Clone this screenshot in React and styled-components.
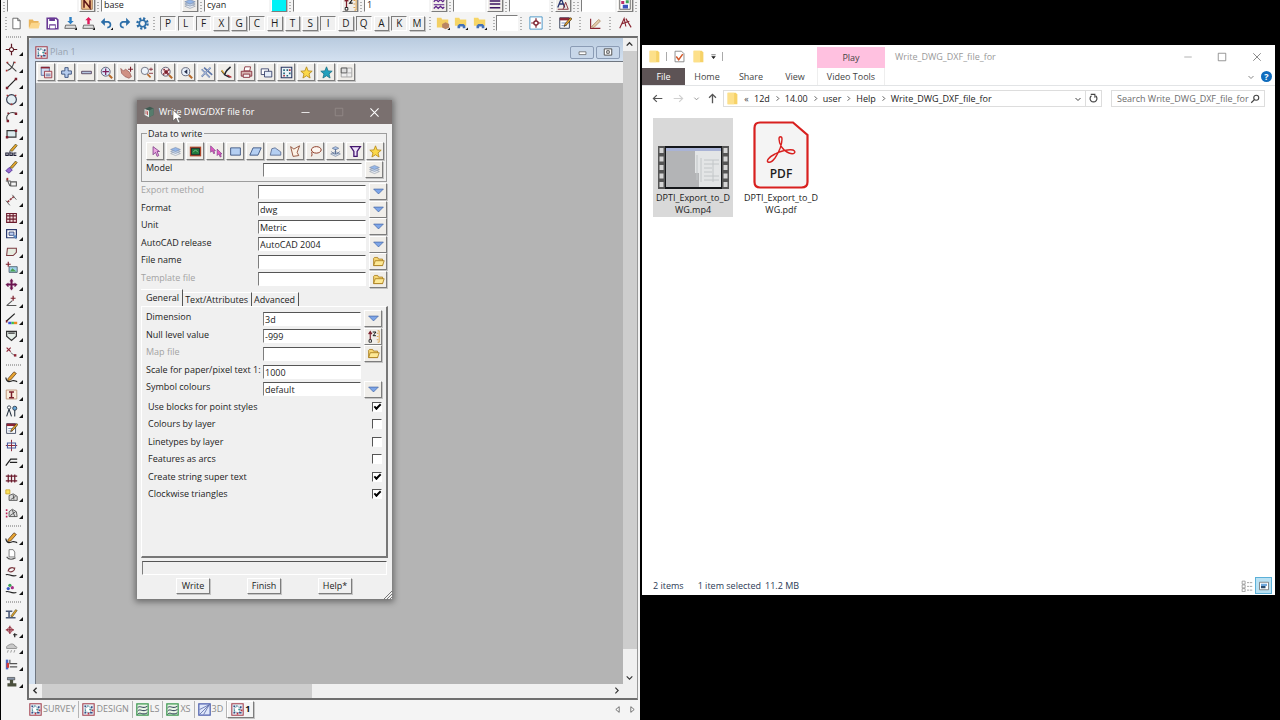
import React from "react";
import styled, { createGlobalStyle, css } from "styled-components";

const GlobalStyle = createGlobalStyle`
  *, *::before, *::after {
    box-sizing: border-box;
  }

  body {
    margin: 0;
    background: #000;
    color: #1c1c1c;
    font: 9px/12px "Open Sans", "Noto Sans", sans-serif;
  }

  button, input, select {
    margin: 0;
    padding: 0;
    border: 0;
    border-radius: 0;
    background: none;
    color: inherit;
    font: inherit;
  }
`;

/* ---------- icons, all on a 16 x 16 grid ---------- */

const star = "M8 1l2 5 5 .4-3.900 3.300 1.300 5.100L8 12l-4.400 2.800 1.300-5.100L1 6.400 6 6z";
const maroon = "#7c1f2c";

const icons = {
  newDoc: (
    <path d="M3.500 1.500h6l3 3v10h-9zM9.500 1.500v3h3" fill="#fff" stroke="#555" />
  ),
  openFolder: (
    <>
      <path d="M1 13V3h5l1 2h6v8z" fill="#e9b45c" />
      <path d="M1 14l3-7h11l-2 7z" fill="#fbd68c" />
    </>
  ),
  save: (
    <>
      <path d="M1.500 1.500h11l2 2v11h-13z" fill="#fff" stroke="#6a3a96" strokeWidth="2" />
      <path d="M4 1h7v4H4zM4 9h8v6H4z" fill="#6a3a96" />
      <path d="M5 10.500h6V14H5z" fill="#fff" />
    </>
  ),
  importData: (
    <>
      <path d="M2 10h12l1 4H1z" fill="#ddd" stroke="#555" />
      <path d="M6.500 0h3v5H12L8 9 4 5h2.500z" fill="#2e7fc2" />
      <path d="M13 16h3v-3z" fill="#111" />
    </>
  ),
  exportData: (
    <>
      <path d="M2 10h12l1 4H1z" fill="#ddd" stroke="#555" />
      <path d="M6.500 9h3V4H12L8 0 4 4h2.500z" fill="#e0195a" />
      <path d="M13 16h3v-3z" fill="#111" />
    </>
  ),
  undo: (
    <>
      <path d="M3 6h7c4 1 4 7-1 7" fill="none" stroke="#2c6ea8" strokeWidth="2" />
      <path d="M6 1v10L1 6z" fill="#2c6ea8" />
      <path d="M13 16h3v-3z" fill="#111" />
    </>
  ),
  redo: (
    <>
      <path d="M13 6H6c-4 1-4 7 1 7" fill="none" stroke="#2c6ea8" strokeWidth="2" />
      <path d="M10 1v10l5-5z" fill="#2c6ea8" />
    </>
  ),
  gear: (
    <>
      <circle cx="8" cy="8" r="6.200" fill="none" stroke="#2c6ea8" strokeWidth="3" strokeDasharray="2.600 2.270" />
      <circle cx="8" cy="8" r="4" fill="none" stroke="#2c6ea8" strokeWidth="2" />
    </>
  ),
  name: (
    <>
      <path d="M1 1h14v14H1z" fill="#f6c690" stroke="#8b5a2b" />
      <path d="M4 13V3l8 10V3" fill="none" stroke="#5a1414" strokeWidth="2" />
    </>
  ),
  layers: (
    <>
      <path d="M8 8l6 2.500L8 13l-6-2.500z" fill="#e9edf3" stroke="#8a94a4" strokeWidth=".7" />
      <path d="M8 5.500L14 8l-6 2.500L2 8z" fill="#c3d2e8" stroke="#7f8da4" strokeWidth=".7" />
      <path d="M8 3l6 2.500L8 8 2 5.500z" fill="#94b6e8" stroke="#7788a6" strokeWidth=".7" />
    </>
  ),
  height: (
    <>
      <path d="M4 3v10M2 5l2-3 2 3" fill="none" stroke={maroon} strokeWidth="1.400" />
      <path d="M2.500 12h3v3h-3z" fill="#fff" stroke="#111" />
      <path d="M7 2.500h4L7.500 7H11" fill="none" stroke="#111" strokeWidth="1.200" />
      <path d="M13 1h2v14h-2M12 4h2M12 8h2M12 12h2" fill="none" stroke="#d99632" />
    </>
  ),
  waves: (
    <path d="M1 5l3-3 3 3 3-3 3 3 2-2M1 9h14M1 14l3-3 3 3 3-3 3 3 2-2" fill="none" stroke="#5a1f86" strokeWidth="1.600" />
  ),
  lines: (
    <path d="M1 4h14M1 8h14M1 13h14" fill="none" stroke="#3c1462" strokeWidth="2" />
  ),
  textStyle: (
    <>
      <path d="M2 12L6 2l4 10M4 8h5" fill="none" stroke="#27346f" strokeWidth="1.500" />
      <path d="M8 14l3-8 3 8M2 14h12" fill="none" stroke={maroon} />
    </>
  ),
  symbols: (
    <>
      <path d="M1 1h14v14H1z" fill="#fff" stroke="#444" />
      <path d="M3 4h4v4H3z" fill="#bd2f6c" />
      <path d="M9 3h4v4H9z" fill="#3aa058" />
      <path d="M5 9h7v5H5z" fill="#3a55c0" />
    </>
  ),
  folderBox: (
    <>
      <path d="M1 13V2h5l1 2h7v9z" fill="#f3cf63" />
      <path d="M7 9l4-2 4 2v4l-4 2-4-2z" fill="#b98563" />
      <path d="M13 16h3v-3z" fill="#111" />
    </>
  ),
  folderGear: (
    <>
      <path d="M1 11V2h5l1 2h7v7z" fill="#f6d566" />
      <path d="M4 14v-3l2-2h5l2 2v3h-3v-2H7v2z" fill="#4472b8" />
      <path d="M13 16h3v-3z" fill="#111" />
    </>
  ),
  target: (
    <>
      <path d="M1 1h14v14H1z" fill="#fff" stroke="#3f8fc4" />
      <circle cx="8" cy="8" r="2.500" fill="none" stroke={maroon} strokeWidth="1.400" />
      <path d="M8 2.500v4M8 9.500v4M2.500 8h4M9.500 8h4" stroke={maroon} strokeWidth="1.400" />
    </>
  ),
  editNote: (
    <>
      <path d="M2 2h11v12H2z" fill="#fff" stroke="#27324d" />
      <path d="M2 2h11v3H2z" fill="#8c2434" />
      <path d="M4 8h6M4 11h6" stroke="#6a86b8" />
      <path d="M7 12l1-3 6-7 2 1-6 7z" fill="#e8a52c" stroke="#3a2a12" strokeWidth=".8" />
    </>
  ),
  measure: (
    <>
      <path d="M2 2v12h12" fill="none" stroke="#8a2531" strokeWidth="1.400" />
      <path d="M3 12l9-9 2 2-8 8z" fill="#e5cfae" stroke="#a8845f" />
    </>
  ),
  script: (
    <path d="M2 14L7 3l2 9M4 9l9-3M9 3l6 10" fill="none" stroke="#8a2531" strokeWidth="1.300" />
  ),
  plan: (
    <>
      <path d="M1 1h14v14H1z" fill="#e5edf3" stroke="#a5404e" strokeWidth="1.300" />
      <path d="M4 11V6l4-2 4 3-2 5z" fill="#fff" stroke="#7f9db5" />
      <path d="M3 3h2v2H3zM11 4h2v2h-2zM3 11h2v2H3zM10 11h3v2h-3z" fill="#324c86" />
      <path d="M7 12h2v2H7zM12 8h2v2h-2z" fill="#bf2d39" />
      <path d="M6 3h2v1H6zM4 8h1v2H4zM9 7h2v2H9z" fill="#2f8f8a" />
    </>
  ),
  section: (
    <>
      <path d="M1 1h14v14H1z" fill="#e9f5e6" stroke="#3e9950" strokeWidth="1.500" />
      <path d="M2 6c3-4 6 2 12-2M2 10c3-4 6 2 12-2M2 14c3-4 6 2 12-2" fill="none" stroke="#22324c" strokeWidth="1.200" />
    </>
  ),
  perspective: (
    <>
      <path d="M1 1h14v14H1z" fill="#dfe7fa" stroke="#4d5fae" strokeWidth="1.500" />
      <path d="M14 2L2 14M14 2L7 14M14 2L2 8" fill="none" stroke="#5a6aa8" />
    </>
  ),
  views: (
    <>
      <path d="M1.500 1.500h10v10h-10z" fill="#cfdcf2" stroke="#49629b" />
      <path d="M1 1h11v2H1z" fill="#8c2434" />
      <path d="M5.500 6.500h9v8h-9z" fill="#f7e4e4" stroke="#8c2434" />
      <path d="M7 10h6M7 12h6" stroke="#49629b" />
    </>
  ),
  plus: <path d="M6 2h4v4h4v4h-4v4H6v-4H2V6h4z" fill="#b7cdee" stroke="#27406f" />,
  minus: <path d="M2 6.500h12v3H2z" fill="#b5c5df" stroke="#4a3350" />,
  zoomIn: (
    <>
      <path d="M11 11l4 4" stroke="#b86b2a" strokeWidth="2.500" />
      <circle cx="7" cy="7" r="5.500" fill="#d9e9fb" stroke="#4a4f66" />
      <path d="M7 3v8M3 7h8" stroke="#7c1f5a" strokeWidth="1.500" />
    </>
  ),
  pan: (
    <>
      <path d="M1 3l3 3 3-2 5 4 2 5-3 2-5-2-4-4z" fill="#cf9183" stroke="#8f4e48" strokeWidth=".8" />
      <path d="M13 1v6M10 4h6" stroke={maroon} strokeWidth="1.300" />
    </>
  ),
  zoomDrag: (
    <>
      <path d="M9 10l4 4" stroke="#b86b2a" strokeWidth="2" />
      <circle cx="6" cy="6" r="4.500" fill="#eef4fb" stroke="#5b6071" />
      <path d="M11 4h5M11 9h5M13.500 2v4" stroke={maroon} />
    </>
  ),
  zoomExtent: (
    <>
      <path d="M11 11l4 4" stroke="#b86b2a" strokeWidth="2.500" />
      <circle cx="7" cy="7" r="5.500" fill="#f6e4e6" stroke="#4a4f66" />
      <path d="M4 5l2-1M10 4l1 2M4 9l1 2M9 11l2-2M6 6h3v3H6z" fill={maroon} stroke={maroon} strokeWidth="1.300" />
    </>
  ),
  zoomBack: (
    <>
      <path d="M11 11l4 4" stroke="#b86b2a" strokeWidth="2.500" />
      <circle cx="7" cy="7" r="5" fill="#e9f1fb" stroke="#4a4f66" />
      <path d="M9 4v6L5 7z" fill="#26304d" />
    </>
  ),
  crossings: (
    <>
      <path d="M2 4l10 10M5 2l10 9M2 13L13 2" fill="none" stroke="#5d76a8" strokeWidth="2" />
      <path d="M2 4l10 10M2 13L13 2" fill="none" stroke="#d8e4f6" strokeWidth=".8" />
    </>
  ),
  check: (
    <>
      <path d="M13 1c-4 3-6 6-7 9" fill="none" stroke="#20242c" strokeWidth="2" />
      <path d="M2 6l4 5 6 3" fill="none" stroke="#20242c" strokeWidth="1.600" />
      <path d="M9 11l5 3" fill="none" stroke="#b02a32" strokeWidth="1.600" />
      <path d="M2 5l3 4" stroke="#d8a52c" strokeWidth="1.600" />
    </>
  ),
  print: (
    <>
      <path d="M5 6l1-5h7l-1 5z" fill="#fff" stroke={maroon} />
      <path d="M1.500 6.500h13v6h-13z" fill="#d8b4b2" stroke={maroon} />
      <path d="M4 10h8v4H4z" fill="#f4efef" stroke={maroon} />
    </>
  ),
  windows: (
    <>
      <path d="M1.500 3.500h9v7h-9z" fill="#fff" stroke="#27335f" />
      <path d="M5.500 6.500h9v7h-9z" fill="#e4ecf8" stroke="#27335f" />
    </>
  ),
  grid: (
    <>
      <path d="M1.500 1.500h13v13h-13z" fill="#eaf2f7" stroke="#27335f" strokeWidth="1.300" />
      <path d="M4 4h2v2H4zM8 4h2v2H8zM4 8h2v2H4zM11 8h2v2h-2zM8 11h2v2H8z" fill="#22647a" />
      <path d="M11 4h2v2h-2zM4 11h2v2H4z" fill="#a52b3b" />
    </>
  ),
  starGold: <path d={star} fill="#fbd84a" stroke="#b58716" />,
  starBlue: <path d={star} fill="#22a0bd" stroke="#1b7189" />,
  layout: (
    <>
      <path d="M1.500 2.500h13v11h-13z" fill="#eee" stroke="#999" />
      <path d="M1.500 2.500h7v6h-7z" fill="#ddd" stroke="#444" />
      <path d="M8.500 8.500v5M8.500 8.500h6" stroke="#aaa" />
    </>
  ),
  point: (
    <>
      <path d="M8 1v4M8 11v4M1 8h4M11 8h4" stroke="#5e1a24" strokeWidth="1.500" />
      <circle cx="8" cy="8" r="2.500" fill="#fff" stroke="#5e1a24" strokeWidth="1.300" />
    </>
  ),
  cross: (
    <>
      <path d="M2 3l12 11M3 13c3-1 7-5 8-11" fill="none" stroke="#444" strokeWidth="1.300" />
      <path d="M2 2h2v2H2zM1 12h2v2H1zM11 2h2v2h-2z" fill="#a33" />
    </>
  ),
  line: (
    <>
      <path d="M3 13L13 3" stroke="#222" strokeWidth="1.500" />
      <path d="M1 12h3v3H1zM12 1h3v3h-3z" fill={maroon} />
    </>
  ),
  circle: (
    <>
      <circle cx="8" cy="8" r="6" fill="#e2eef3" stroke="#333b4f" strokeWidth="1.400" />
      <path d="M2 2h2v2H2zM12 2h2v2h-2zM7 13h2v2H7z" fill="#a33" />
    </>
  ),
  arc: (
    <>
      <path d="M3 13C0 7 6 1 13 4" fill="none" stroke="#444" strokeWidth="1.300" />
      <path d="M2 12h3v3H2zM12 3h3v3h-3zM3 3h2v2H3z" fill={maroon} />
    </>
  ),
  rect: (
    <>
      <path d="M2.500 4.500h11v8h-11z" fill="#dcebee" stroke="#333" strokeWidth="1.400" />
      <path d="M1 11h3v3H1zM12 3h3v3h-3z" fill={maroon} />
    </>
  ),
  abcPen: (
    <>
      <path d="M6 8l7-8 2 2-6 7z" fill="#e2a22a" stroke="#442" strokeWidth=".8" />
      <path d="M1 14v-3h3v3zM6 9v5h3v-3H6M14 11h-3v3h3" fill="none" stroke="#1c1c35" strokeWidth="1.300" />
    </>
  ),
  stylePen: (
    <>
      <path d="M6 8l7-8 2 2-6 7z" fill="#e2a22a" stroke="#442" strokeWidth=".8" />
      <path d="M5 8l4 3-4 4-4-3z" fill="#9a6bd0" stroke="#4a2f94" />
    </>
  ),
  leader: (
    <>
      <path d="M2 2l4 9M1 5h6M7 6h7v5H7z" fill="none" stroke="#555" strokeWidth="1.300" />
      <path d="M2 1h2v3H2z" fill="#a33" />
    </>
  ),
  dimension: (
    <>
      <path d="M3 10l8-7" fill="none" stroke="#8c3a40" strokeWidth="2" strokeDasharray="3 1" />
      <path d="M1 8l5 6M9 1l5 6" fill="none" stroke="#666" strokeWidth="1.200" />
    </>
  ),
  table: (
    <path d="M2 3h12v11H2zM2 6h12M2 10h12M6 3v11M10 3v11" fill="#f3dcdd" stroke="#6a1a2c" strokeWidth="1.300" />
  ),
  image: (
    <>
      <path d="M2 2h12v10H2z" fill="#fff" stroke="#2b3a6e" strokeWidth="1.500" />
      <path d="M5 5h6v4H5z" fill="#bcd0f4" stroke="#2b3a6e" />
      <path d="M9 9h5v5z" fill="#5a8ac4" />
    </>
  ),
  shape: <path d="M3 4h11v5l-4 4H2z" fill="#e6ece0" stroke="#7c3a40" strokeWidth="1.300" />,
  picture: (
    <>
      <path d="M5 7h10v7H5z" fill="#9fd0ea" stroke="#456" />
      <path d="M6 13l3-4 5 4z" fill="#4da24f" />
      <path d="M4 1v6M1 4h6" stroke={maroon} strokeWidth="1.400" />
    </>
  ),
  move: (
    <path d="M8 1l2 3H9v3h3V6l3 2-3 3V9H9v3h1l-2 3-2-3h1V9H4v2L1 8l3-2v1h3V4H6z" fill="#6b1450" stroke="#6b1450" strokeWidth=".5" />
  ),
  pointUp: (
    <>
      <path d="M2 13L9 7M2 13h12" stroke="#555" strokeWidth="1.300" />
      <path d="M10 1v6M7 4h6" stroke={maroon} strokeWidth="1.500" />
    </>
  ),
  colourLine: (
    <>
      <path d="M2 11L12 2" stroke="#222" strokeWidth="1.500" />
      <path d="M1 10h2v3H1z" fill={maroon} />
      <path d="M4 12h4v3H4z" fill="#3a55e0" />
      <path d="M8 12h3v3H8z" fill="#3bc24a" />
      <path d="M11 12h4v3h-4z" fill="#e88a22" />
    </>
  ),
  polygon: <path d="M2 3h12v6l-6 5-6-5zM4 5h8" fill="#e6efe9" stroke="#333" strokeWidth="1.500" />,
  snapLine: (
    <>
      <path d="M2 2l5 5M7 2L2 7" stroke="#8c2434" strokeWidth="1.400" />
      <path d="M7 8l5 4" stroke="#555" />
      <path d="M11 10h3v3h-3z" fill="#8c2434" />
    </>
  ),
  pencil: (
    <>
      <path d="M4 9l7-8 3 2-7 8-4 1z" fill="#e6a331" stroke="#4a2c12" strokeWidth=".8" />
      <path d="M1 8c1 7 5 5 8 4s4 1 6 1" fill="none" stroke="#222" strokeWidth="1.400" />
    </>
  ),
  textI: (
    <>
      <path d="M1.500 2.500h13v11h-13z" fill="#faeedd" stroke="#b78a6a" />
      <path d="M5 5h6M5 12h6M8 5v7" fill="none" stroke="#7c1f2c" strokeWidth="1.800" />
    </>
  ),
  survey: (
    <>
      <path d="M5 5L2 14M5 5l3 9M12 6v8" fill="none" stroke="#23303e" strokeWidth="1.300" />
      <circle cx="5" cy="3" r="2" fill="#fff" stroke="#23303e" />
      <circle cx="12" cy="4" r="2.500" fill="#6aa9dc" stroke="#23303e" />
    </>
  ),
  alignment: (
    <>
      <path d="M1 8h14M8 1v14" stroke="#8c2434" strokeWidth="1.200" />
      <path d="M3 5h10v6H3z" fill="none" stroke="#4a5a9e" strokeWidth="1.300" />
    </>
  ),
  profile: <path d="M1 13l6-8h8M6 9h9" fill="none" stroke="#222" strokeWidth="1.500" />,
  railway: <path d="M1 5h14M1 11h14M4 3v10M8 3v10M12 3v10" fill="none" stroke="#6a1a2c" strokeWidth="1.500" />,
  surfaceNew: (
    <>
      <path d="M5 14V8l5-2 5 3v5z" fill="#ddd" stroke="#444" />
      <path d="M7 13l6-4M10 7l1 6" stroke="#444" />
      <path d="M1 1h5v5H1z" fill="#fbe25a" stroke="#c9a227" />
    </>
  ),
  surface: (
    <>
      <path d="M5 13V7l4-3 5 3 1 6z" fill="#ddd" stroke="#444" />
      <path d="M6 12l7-5M9 5l3 8" stroke="#444" />
      <path d="M1 4h2v2H1zM1 8h2v2H1zM1 12h2v2H1z" fill="#b25" />
    </>
  ),
  pageCurve: (
    <>
      <path d="M5 2h5l2 3v6H5z" fill="#fff" stroke="#666" />
      <path d="M2 11c3 4 6 4 11 1" fill="none" stroke="#555" strokeWidth="1.300" />
    </>
  ),
  recalc: (
    <>
      <path d="M4 8c0-5 6-6 8-3M12 3c0 5-4 6-7 5" fill="none" stroke="#7c3a40" strokeWidth="1.600" />
      <path d="M1 12c4-2 6 3 13 1" fill="none" stroke="#222" strokeWidth="1.300" />
    </>
  ),
  flowers: (
    <>
      <circle cx="6" cy="4" r="2" fill="#35a052" />
      <circle cx="9" cy="7" r="2" fill="#a53087" />
      <circle cx="4" cy="8" r="2" fill="#3b56c4" />
      <path d="M1 12c4-2 6 3 13 1" fill="none" stroke="#222" strokeWidth="1.300" />
    </>
  ),
  pipePen: (
    <>
      <path d="M1 4h8M1 12h12M5 4v8" stroke="#4d5b78" strokeWidth="2" />
      <path d="M7 10l6-8 2 1-6 8z" fill="#e2a22a" stroke="#442" strokeWidth=".7" />
    </>
  ),
  moveNode: (
    <>
      <path d="M6 1v10M1 6h10" stroke="#8c2434" strokeWidth="1.400" />
      <circle cx="6" cy="6" r="3" fill="none" stroke="#8c2434" />
      <path d="M10 12h5M12 10v5" stroke="#222" strokeWidth="1.500" />
    </>
  ),
  rain: (
    <>
      <path d="M2 8c-1-4 3-4 4-5s6-1 6 2c3 0 3 3 2 3z" fill="#c9c9c9" stroke="#888" />
      <path d="M4 10l-1 3M8 10l-1 3M12 10l-1 3" stroke="#999" strokeWidth="1.200" />
    </>
  ),
  culvert: (
    <>
      <path d="M1 2h3v12H1z" fill="#4a66c8" />
      <path d="M2 6h3v6H2z" fill="#d23a3a" />
      <path d="M6 2v5h9M6 11h9" fill="none" stroke="#555" strokeWidth="1.400" />
    </>
  ),
  machine: (
    <>
      <path d="M3 3h9v3H3z" fill="#8a96a8" stroke="#333" strokeWidth=".7" />
      <path d="M6 6h4v4h4v4H3v-4h3z" fill="#4a4f3c" />
    </>
  ),
  pick: <path d="M5 2v10l3-3 2 5 2-1-2-5h3z" fill="#eba6e2" stroke="#7d3a86" />,
  viewPick: (
    <>
      <path d="M1 2h14v12H1z" fill="#b5482a" />
      <path d="M3 4h10v8H3z" fill="#1f7a3d" stroke="#123" />
      <path d="M5 9l3-3 3 3" fill="none" stroke="#8fd19b" />
    </>
  ),
  pickMany: (
    <>
      <path d="M2 1v8l2-2 2 4 1-1-1-3h2z" fill="#e25ac2" stroke="#7d3a86" strokeWidth=".8" />
      <path d="M10 5v8l2-2 2 4 1-1-1-3h2z" fill="#e25ac2" stroke="#7d3a86" strokeWidth=".8" />
    </>
  ),
  blueRect: <path d="M2 3.500h12v9H2z" fill="#b5cff2" stroke="#2d4777" />,
  parallelogram: <path d="M5 3.500h10l-4 9H1z" fill="#b5cff2" stroke="#2d4777" />,
  bluePoly: <path d="M1.500 12.500l2-8 4-1 7 5v4z" fill="#b5cff2" stroke="#54688f" />,
  fence: <path d="M2 2l4 3 7-4-3 8 2 4-7 1z" fill="#fdf3e6" stroke="#8c4a34" strokeWidth="1.100" />,
  lasso: (
    <>
      <ellipse cx="9" cy="6" rx="6" ry="4" fill="#fdf6f0" stroke="#8c3a24" strokeWidth="1.200" />
      <path d="M4 8c-2 2 1 3-1 6" fill="none" stroke="#8c3a24" strokeWidth="1.200" />
    </>
  ),
  anchor: (
    <>
      <path d="M8 8l6 3-6 3-6-3z" fill="#d6dfeb" stroke="#76849c" strokeWidth=".8" />
      <path d="M8 2l4 2-4 2-4-2z" fill="#a9c1e6" stroke="#5b6f92" strokeWidth=".8" />
      <path d="M8 5v6M3 8c2 4 8 4 10 0" fill="none" stroke="#5b6f92" strokeWidth="1.200" />
    </>
  ),
  filter: <path d="M2 2h12l-4 6v6H6V8z" fill="#efe2fb" stroke="#43166d" strokeWidth="1.600" />,
  dropArrow: <path d="M2 5h12l-6 6z" fill="#7ea6e8" stroke="#3a5c9c" strokeWidth=".8" />,
  folder: (
    <>
      <path d="M2 13V4l1-1h4l1 2h5v8z" fill="#f7d774" stroke="#a87b1a" />
      <path d="M2 13l2-6h11l-2 6z" fill="#fde996" stroke="#a87b1a" />
    </>
  ),
  cube: (
    <>
      <path d="M2 4l7-3 5 2v9l-6 3-6-3z" fill="#3f5b52" />
      <path d="M2 4l6 2v9l-6-3z" fill="#e6e8e8" />
      <path d="M8 6l6-3v9l-6 3z" fill="#567c6c" />
      <path d="M4 6v5M6 7v5" stroke="#a33" />
    </>
  ),
  explorerFolder: (
    <>
      <path d="M2 1h10l2 2v12H2z" fill="#f6d268" />
      <path d="M2 1h8v14H2z" fill="#fde08a" />
    </>
  ),
  docCheck: (
    <>
      <path d="M2.500 1.500h8l3 3v10h-11z" fill="#fff" stroke="#777" />
      <path d="M4 8l3 4 5-7" fill="none" stroke="#d2582a" strokeWidth="1.800" />
    </>
  ),
  back: <path d="M15 8H2M7 3L2 8l5 5" fill="none" stroke="#555" strokeWidth="1.700" />,
  forward: <path d="M1 8h13M9 3l5 5-5 5" fill="none" stroke="#d0d0d0" strokeWidth="1.700" />,
  up: <path d="M8 15V2M3 7l5-5 5 5" fill="none" stroke="#555" strokeWidth="1.900" />,
  chevron: <path d="M3 6l5 5 5-5" fill="none" stroke="currentColor" strokeWidth="2" />,
  chevronUp: <path d="M3 10l5-5 5 5" fill="none" stroke="currentColor" strokeWidth="2.500" />,
  chevronLeft: <path d="M10 3L5 8l5 5" fill="none" stroke="currentColor" strokeWidth="2.500" />,
  chevronRight: <path d="M6 3l5 5-5 5" fill="none" stroke="currentColor" strokeWidth="2" />,
  caretBar: <path d="M3 4h10M4 8h8l-4 5z" fill="#222" stroke="#222" strokeWidth="1.300" />,
  refresh: (
    <>
      <path d="M5 4a5 5 0 1 0 6 0" fill="none" stroke="#444" strokeWidth="1.700" />
      <path d="M4 2h6v5" fill="none" stroke="#444" strokeWidth="1.500" />
    </>
  ),
  search: (
    <>
      <circle cx="10" cy="6" r="4" fill="none" stroke="#444" strokeWidth="1.800" />
      <path d="M7 9l-5 5" stroke="#444" strokeWidth="2" />
    </>
  ),
  winMin: <path d="M3 8h10" stroke="currentColor" />,
  winMax: <path d="M3 3h10v10H3z" fill="none" stroke="currentColor" />,
  winClose: <path d="M3 3l10 10M13 3L3 13" stroke="currentColor" strokeWidth="1.300" />,
  mdiMin: <path d="M3 7h10v4H3z" fill="#fff" stroke="#555" />,
  mdiMax: <path d="M2 3h12v10H2zM6 6h4v4H6z" fill="#fff" stroke="#555" strokeWidth="1.600" />,
  triLeft: <path d="M11 3v10L5 8z" fill="#fff" stroke="#444" strokeWidth="1.300" />,
  triRight: <path d="M5 3v10l6-5z" fill="#fff" stroke="#444" strokeWidth="1.300" />,
  details: (
    <path d="M1.500 1.500h4v4h-4zM1.500 6.500h4v4h-4zM1.500 11.500h4v4h-4zM8 3.500h3M12 3.500h3M8 8.500h3M12 8.500h3M8 13.500h3M12 13.500h3" fill="none" stroke="#888" />
  ),
  thumbs: (
    <>
      <path d="M2 3h12v10H2z" fill="#fff" stroke="#666" />
      <path d="M4 5h8v3H4z" fill="#6fa8dc" />
      <path d="M4 8h6v3H4z" fill="#2d4d6d" />
    </>
  ),
};

const Svg = styled.svg`
  display: block;
  flex: none;
`;

const Icon = ({ name, size = 14 }) => (
  <Svg width={size} height={size} viewBox="0 0 16 16" aria-hidden="true">
    {icons[name]}
  </Svg>
);

/* ---------- shared bits ---------- */

const raised = css`
  border: 1px solid;
  border-color: #fff #7d7d7d #7d7d7d #fff;
  box-shadow: 1px 1px 0 #c4c4c4;
`;

const sunken = css`
  border: 1px solid;
  border-color: #7d7d7d #fff #fff #7d7d7d;
`;

const Screen = styled.div`
  display: grid;
  grid-template-columns: 1fr 1fr;
  height: 100vh;
  min-height: 720px;
`;

const ToolButton = styled.button`
  ${raised}
  display: flex;
  flex: none;
  align-items: center;
  justify-content: center;
  width: 18px;
  height: ${(p) => p.$height || 18}px;
  background: #f0eeea;
`;

const FlatButton = styled.button`
  display: flex;
  flex: none;
  align-items: center;
  justify-content: center;
  width: ${(p) => p.$width || 18}px;
  color: ${(p) => p.$color || "#444"};
`;

/* ---------- CAD application ---------- */

const CadApp = styled.div`
  display: flex;
  flex-direction: column;
  min-width: 0;
  border-left: 1px solid #000;
  background: #f4f4f4;
  overflow: hidden;
`;

const PropertyBar = styled.div`
  display: flex;
  flex: none;
  align-items: flex-end;
  gap: 2px;
  height: 12px;
  padding-left: 2px;
  overflow: hidden;
`;

const Grip = styled.span`
  flex: none;
  width: 2px;
  height: 13px;
  background: repeating-linear-gradient(#b0b0b0 0 1px, transparent 1px 3px);
`;

const PropertyInput = styled.input`
  ${sunken}
  flex: none;
  width: ${(p) => p.$width}px;
  height: 16px;
  padding-left: 2px;
  background: #fff;
`;

const PropertyButton = styled(ToolButton)`
  width: 16px;
  height: 16px;
`;

const Swatch = styled(PropertyButton)`
  background: #00f2f6;
`;

const MainBar = styled.div`
  display: flex;
  flex: none;
  align-items: center;
  height: 22px;
  padding-left: 4px;
`;

const SnapKeys = styled.div`
  display: flex;
  gap: 2px;
  width: 265px;
  margin: 0 4px 0 3px;
`;

const SnapKey = styled.button`
  flex: 1;
  height: 15px;
  background: #f0f0f0;
  font-size: 10px;
  line-height: 12px;
  ${(p) => (p.$on ? sunken : raised)}
`;

const Slot = styled.div`
  display: flex;
  flex: none;
  align-items: center;
  justify-content: space-evenly;
  width: ${(p) => p.$width}px;
`;

const Workspace = styled.div`
  display: flex;
  flex: 1;
  min-height: 0;
`;

const SideBar = styled.aside`
  display: flex;
  flex: none;
  flex-direction: column;
  align-items: center;
  width: 25px;
  height: 656px;
`;

const SideGrip = styled.span`
  flex: none;
  width: 15px;
  height: 2px;
  margin: ${(p) => (p.$first ? "2px 0 3px" : "4px 0 3px")};
  background: repeating-linear-gradient(90deg, #b0b0b0 0 1px, transparent 1px 2px);
`;

const SideTool = styled.button`
  display: flex;
  flex: 1;
  align-items: center;
  justify-content: center;
  gap: 1px;
  width: 20px;
  min-height: 0;

  &::after {
    content: "";
    align-self: flex-end;
    border: 2px solid;
    border-color: transparent #111 #111 transparent;
    margin-bottom: 2px;
  }
`;

const MdiFrame = styled.div`
  display: flex;
  flex: 1;
  flex-direction: column;
  min-width: 0;
`;

const MdiArea = styled.div`
  display: grid;
  flex: 1;
  grid-template: minmax(0, 1fr) 14px / minmax(0, 1fr) 14px;
  margin: 2px 2px 0 1px;
  border: 2px solid #6e6e6e;
  border-right: 1px solid #999;
  background: #f0f0f0;
`;

const PlanWindow = styled.section`
  display: flex;
  flex-direction: column;
  padding-left: 6px;
  border-top-left-radius: 4px;
  background: linear-gradient(#b9cbdf, #d5e2f1 24px);
`;

const PlanTitle = styled.header`
  display: flex;
  flex: none;
  align-items: center;
  gap: 2px;
  height: 23px;
  padding: 5px 3px 0 0;
  color: #98a3b0;
`;

const Spacer = styled.div`
  flex: 1;
`;

const MdiButton = styled.button`
  display: flex;
  align-items: center;
  justify-content: center;
  width: 24px;
  height: 13px;
  border: 1px solid #8b9cb5;
  border-radius: 2px;
  background: #c8d7e9;
`;

const PlanTools = styled.div`
  display: flex;
  flex: none;
  gap: 2px;
  padding: 1px 0 2px 1px;
  border-top: 1px solid #6f7680;
  border-left: 1px solid #6f7680;
  background: #f0f0f0;
`;

const Canvas = styled.div`
  position: relative;
  flex: 1;
  border-left: 1px solid #6f7680;
  background: #b4b4b4;
`;

const Scrollbar = styled.div`
  display: flex;
  flex-direction: ${(p) => (p.$vertical ? "column" : "row")};
  background: #f0f0f0;
`;

const ScrollEnd = styled.button`
  display: flex;
  flex: none;
  align-items: center;
  justify-content: center;
  width: 13px;
  height: 13px;
  color: #333;
`;

const ScrollThumb = styled.div`
  flex: ${(p) => p.$grow};
  background: #cdcdcd;
`;

const ScrollRest = styled.div`
  flex: ${(p) => p.$grow};
`;

const ViewTabs = styled.nav`
  display: flex;
  flex: none;
  align-items: center;
  height: 20px;
  padding-bottom: 2px;
  color: #8a8a8a;
`;

const ViewTab = styled.button`
  display: flex;
  align-items: center;
  gap: 1px;
  height: 17px;
  padding: 0 3px;
  border-right: 1px solid #b5b5b5;
  ${(p) =>
    p.$active &&
    css`
      ${raised}
      color: #111;
      font-weight: 700;
    `}
`;

/* ---------- export dialog ---------- */

const Dialog = styled.form`
  position: absolute;
  top: 17px;
  left: 101px;
  width: 255px;
  background: #f0f0f0;
  box-shadow: 0 1px 6px 2px rgba(0, 0, 0, 0.4);
`;

const DialogTitle = styled.header`
  display: flex;
  align-items: center;
  height: 24px;
  padding-left: 6px;
  background: #7a706f;
  color: #fff;

  h2 {
    flex: 1;
    margin: 0 0 0 4px;
    font-size: 9px;
    font-weight: 400;
  }
`;

const Cursor = styled.svg`
  position: absolute;
  top: 9px;
  left: 35px;
`;

const DialogBody = styled.div`
  padding: 4px 4px 5px;
`;

const Group = styled.fieldset`
  min-width: 0;
  margin: 0 1px 1px 0;
  padding: 3px 2px 3px 4px;
  border: 1px solid #9d9d9d;

  legend {
    margin-left: 1px;
    padding: 0 2px 0 1px;
    line-height: 11px;
  }
`;

const PickTools = styled.div`
  display: flex;
  gap: 2px;
  height: 19px;
`;

const Rows = styled.div`
  display: flex;
  flex-direction: column;
  height: ${(p) => p.$height}px;
`;

const Row = styled.div`
  display: flex;
  flex: 1;
  align-items: center;
  gap: 3px;
  padding-right: 1px;
`;

const RowLabel = styled.label`
  flex: none;
  align-self: flex-start;
  width: 114px;
  color: ${(p) => (p.$muted ? "#a3a3a3" : "#1c1c1c")};
  line-height: 14px;
  white-space: nowrap;
`;

const box = css`
  ${sunken}
  flex: 1;
  min-width: 0;
  height: 14px;
  padding: 1px 0 0 1px;
  border-top-color: #555;
  background: #fff;
`;

const TextBox = styled.input`
  ${box}
`;

const SelectBox = styled.select`
  ${box}
  appearance: none;
`;

const NoButton = styled.span`
  width: 18px;
`;

const Tabs = styled.div`
  display: flex;
  align-items: flex-end;
  height: 18px;
`;

const Tab = styled.button`
  height: ${(p) => (p.$active ? 17 : 14)}px;
  padding: 0 3px 0 2px;
  padding-left: ${(p) => (p.$active ? 5 : 2)}px;
  border-right: 1px solid #555;
  border-top: 1px solid #fff;
`;

const TabPanel = styled.div`
  min-height: 252px;
  padding: 3px 3px 0 4px;
  border: 1px solid;
  border-color: #fff #777 #777 #fff;
  border-right-width: 2px;
  border-bottom-width: 2px;
`;

const CheckRow = styled.label`
  display: flex;
  flex: 1;
  align-items: center;
  justify-content: space-between;
  padding: 0 1px 0 2px;
`;

const Checkbox = styled.input`
  ${sunken}
  appearance: none;
  width: 10px;
  height: 10px;
  border-top-color: #555;
  border-left-color: #555;
  background: #fff;

  &:checked::after {
    content: "";
    display: block;
    width: 7px;
    height: 4px;
    margin: 1px 0 0 1px;
    border: solid #000;
    border-width: 0 0 2px 2px;
    transform: rotate(-45deg);
  }
`;

const Message = styled.output`
  ${sunken}
  display: block;
  height: 14px;
  margin: 3px 1px 3px;
  border-top-color: #555;
`;

const Actions = styled.div`
  display: flex;
  gap: 37px;
  padding-left: 35px;
`;

const ActionButton = styled.button`
  ${raised}
  width: 34px;
  height: 16px;
`;

const Resize = styled.svg`
  position: absolute;
  right: 0;
  bottom: 0;
`;

/* ---------- file explorer ---------- */

const Desktop = styled.div`
  display: flex;
  min-width: 0;
  padding: 45px 5px 125px 2px;
  background: #000;
`;

const Explorer = styled.main`
  display: flex;
  flex: 1;
  flex-direction: column;
  min-width: 0;
  background: #fff;
`;

const ExplorerTitle = styled.header`
  display: flex;
  align-items: center;
  height: 23px;
  color: #999;
`;

const QuickAccess = styled.div`
  display: flex;
  align-items: center;
  gap: 5px;
  width: 175px;
  padding-left: 6px;
`;

const Divider = styled.span`
  width: 1px;
  height: 9px;
  background: #aaa;
`;

const PlayTab = styled.button`
  align-self: flex-end;
  width: 68px;
  height: 21px;
  background: #ffc1e0;
  color: #444;
`;

const ExplorerName = styled.span`
  flex: 1;
  padding-left: 10px;
`;

const Ribbon = styled.nav`
  display: flex;
  align-items: center;
  height: 18px;
  border-bottom: 1px solid #e2e4e6;
`;

const RibbonTab = styled.button`
  width: ${(p) => p.$width || 44}px;
  height: 17px;
  color: #444;
  ${(p) => p.$file && "background: #5d5355; color: #fff;"}
  ${(p) => p.$context && "border: solid #eee; border-width: 0 1px;"}
`;

const Help = styled.button`
  width: 11px;
  height: 11px;
  margin: 0 3px 0 6px;
  border-radius: 50%;
  background: #0f6cbd;
  color: #fff;
  font-weight: 700;
  line-height: 11px;
`;

const AddressRow = styled.div`
  display: flex;
  align-items: center;
  padding: 4px 10px 11px 6px;
`;

const Address = styled.div`
  display: flex;
  flex: 1;
  align-items: center;
  height: 17px;
  margin: 0 9px 0 2px;
  padding-left: 2px;
  border: 1px solid #ddd;
`;

const Crumb = styled.a`
  color: #222;
  text-decoration: none;
`;

const CrumbArrow = styled.span`
  display: flex;
  justify-content: center;
  width: 15px;
  color: #444;
`;

const Refresh = styled(FlatButton)`
  height: 15px;
  border-left: 1px solid #ddd;
`;

const SearchBox = styled.label`
  display: flex;
  align-items: center;
  width: 154px;
  height: 17px;
  padding: 0 4px 0 5px;
  border: 1px solid #ddd;

  input {
    flex: 1;
    min-width: 0;
  }

  input::placeholder {
    color: #6d6d6d;
    opacity: 1;
  }
`;

const Files = styled.ul`
  display: flex;
  flex: 1;
  align-items: flex-start;
  gap: 8px;
  margin: 0;
  padding: 0 11px;
  list-style: none;
`;

const File = styled.li`
  display: flex;
  flex-direction: column;
  align-items: center;
  justify-content: flex-end;
  gap: 3px;
  width: 80px;
  height: 99px;
  padding-bottom: 1px;
  background: ${(p) => (p.$selected ? "#d9d9d9" : "transparent")};
  text-align: center;
  word-break: break-all;
`;

const PdfBadge = styled.div`
  display: grid;
  justify-items: center;

  > * {
    grid-area: 1 / 1;
  }

  span {
    align-self: end;
    padding-bottom: 7px;
    font-size: 12px;
    font-weight: 600;
    line-height: 16px;
  }
`;

const StatusBar = styled.footer`
  display: flex;
  align-items: center;
  height: 19px;
  padding: 0 3px 0 11px;
  color: #2b3a55;
`;

const StatusItem = styled.span`
  margin-right: ${(p) => p.$gap || 0}px;
`;

const ViewMode = styled(FlatButton)`
  width: 17px;
  height: 17px;
  ${(p) => p.$active && "border: 1px solid #5cb0d8; background: #b9e1f3;"}
`;

/* ---------- data ---------- */

const snapKeys = [..."PLFXGCHTSIDQAKM"];
const snapsOn = "PLFCIQK";

const mainTools = ["newDoc", "openFolder", "save", "importData", "exportData", "undo", "redo", "gear"];

const sideGroups = [
  ["point", "cross", "line", "circle", "arc", "rect", "abcPen", "stylePen", "leader", "dimension",
    "table", "image", "shape", "picture", "move", "pointUp", "colourLine", "polygon", "snapLine"],
  ["pencil", "textI", "survey", "editNote", "alignment", "profile", "railway", "surfaceNew", "surface"],
  ["pencil", "pageCurve", "recalc", "flowers"],
  ["pipePen", "moveNode", "rain", "culvert", "machine"],
];

const planTools = ["views", "plus", "minus", "zoomIn", "pan", "zoomDrag", "zoomExtent", "zoomBack",
  "crossings", "check", "print", "windows", "grid", "starGold", "starBlue", "layout"];

const pickTools = ["pick", "layers", "viewPick", "pickMany", "blueRect", "parallelogram", "bluePoly",
  "fence", "lasso", "anchor", "filter", "starGold"];

const fileFields = [
  { label: "Export method", options: [""], icon: "dropArrow", muted: true },
  { label: "Format", options: ["dwg", "dxf"], icon: "dropArrow" },
  { label: "Unit", options: ["Metric", "Imperial"], icon: "dropArrow" },
  { label: "AutoCAD release", options: ["AutoCAD 2004"], icon: "dropArrow" },
  { label: "File name", value: "", icon: "folder" },
  { label: "Template file", value: "", icon: "folder", muted: true },
];

const generalFields = [
  { label: "Dimension", options: ["3d", "2d"], icon: "dropArrow" },
  { label: "Null level value", value: "-999", icon: "height" },
  { label: "Map file", value: "", icon: "folder", muted: true },
  { label: "Scale for paper/pixel text 1:", value: "1000" },
  { label: "Symbol colours", options: ["default"], icon: "dropArrow" },
];

const checks = [
  ["Use blocks for point styles", true],
  ["Colours by layer", false],
  ["Linetypes by layer", false],
  ["Features as arcs", false],
  ["Create string super text", true],
  ["Clockwise triangles", true],
];

const viewTabs = [
  ["SURVEY", "plan"],
  ["DESIGN", "plan"],
  ["LS", "section"],
  ["XS", "section"],
  ["3D", "perspective"],
  ["1", "plan"],
];

const crumbs = ["12d", "14.00", "user", "Help", "Write_DWG_DXF_file_for"];

/* ---------- components ---------- */

const Field = ({ label, value, options, icon, muted }) => {
  const id = label.toLowerCase().replace(/[^a-z]+/g, "-");
  return (
    <Row>
      <RowLabel htmlFor={id} $muted={muted}>{label}</RowLabel>
      {options ? (
        <SelectBox id={id}>
          {options.map((o) => <option key={o}>{o}</option>)}
        </SelectBox>
      ) : (
        <TextBox id={id} defaultValue={value} />
      )}
      {icon ? (
        <ToolButton type="button" $height={17} aria-label={`Choose ${label}`}>
          <Icon name={icon} size={13} />
        </ToolButton>
      ) : (
        <NoButton />
      )}
    </Row>
  );
};

const ExportDialog = () => (
  <Dialog onSubmit={(e) => e.preventDefault()}>
    <DialogTitle>
      <Icon name="cube" size={12} />
      <h2>Write DWG/DXF file for</h2>
      <FlatButton type="button" $width={34} $color="#fff" aria-label="Minimize"><Icon name="winMin" size={13} /></FlatButton>
      <FlatButton type="button" $width={34} $color="#968c8b" aria-label="Maximize"><Icon name="winMax" size={12} /></FlatButton>
      <FlatButton type="button" $width={36} $color="#fff" aria-label="Close"><Icon name="winClose" size={13} /></FlatButton>
    </DialogTitle>
    <DialogBody>
      <Group>
        <legend>Data to write</legend>
        <PickTools>
          {pickTools.map((t) => (
            <ToolButton key={t} type="button" aria-label={t}><Icon name={t} size={13} /></ToolButton>
          ))}
        </PickTools>
        <Field label="Model" value="" icon="layers" />
      </Group>
      <Rows $height={105}>
        {fileFields.map((f) => <Field key={f.label} {...f} />)}
      </Rows>
      <Tabs role="tablist">
        <Tab type="button" role="tab" aria-selected="true" $active>General</Tab>
        <Tab type="button" role="tab">Text/Attributes</Tab>
        <Tab type="button" role="tab">Advanced</Tab>
      </Tabs>
      <TabPanel role="tabpanel">
        <Rows $height={88}>
          {generalFields.map((f) => <Field key={f.label} {...f} />)}
        </Rows>
        <Rows $height={105}>
          {checks.map(([label, on]) => (
            <CheckRow key={label}>
              {label}
              <Checkbox type="checkbox" defaultChecked={on} />
            </CheckRow>
          ))}
        </Rows>
      </TabPanel>
      <Message />
      <Actions>
        <ActionButton type="submit">Write</ActionButton>
        <ActionButton type="button">Finish</ActionButton>
        <ActionButton type="button">Help*</ActionButton>
      </Actions>
    </DialogBody>
    <Resize width="9" height="9" viewBox="0 0 9 9">
      <path d="M1 9l8-8M4 9l5-5M7 9l2-2" stroke="#777" />
    </Resize>
    <Cursor width="10" height="15" viewBox="0 0 10 15">
      <path d="M1 1v11l3-3 2 5 2-1-2-4h4z" fill="#fff" stroke="#555" strokeWidth=".6" />
    </Cursor>
  </Dialog>
);

const TopBars = () => (
  <>
    <PropertyBar>
      <Grip />
      <PropertyInput $width={70} aria-label="Name" />
      <PropertyButton aria-label="Names"><Icon name="name" size={12} /></PropertyButton>
      <Grip />
      <PropertyInput $width={79} defaultValue="base" aria-label="Model" />
      <PropertyButton aria-label="Models"><Icon name="layers" /></PropertyButton>
      <Grip />
      <PropertyInput $width={65} defaultValue="cyan" aria-label="Colour" />
      <Swatch aria-label="Colours" />
      <Grip />
      <PropertyInput $width={47} aria-label="Height" />
      <PropertyButton aria-label="Heights"><Icon name="height" /></PropertyButton>
      <Grip />
      <PropertyInput $width={65} defaultValue="1" aria-label="Linestyle" />
      <PropertyButton aria-label="Linestyles"><Icon name="waves" size={12} /></PropertyButton>
      <Grip />
      <PropertyInput $width={32} aria-label="Weight" />
      <PropertyButton aria-label="Weights"><Icon name="lines" size={12} /></PropertyButton>
      <Grip />
      <PropertyInput $width={40} aria-label="Textstyle" />
      <Grip />
      <PropertyButton aria-label="Textstyles"><Icon name="textStyle" /></PropertyButton>
      <Grip />
      <Grip />
      <PropertyInput $width={34} aria-label="Symbol" />
      <PropertyButton aria-label="Symbols"><Icon name="symbols" size={12} /></PropertyButton>
      <Grip />
    </PropertyBar>
    <MainBar>
      <Grip />
      {mainTools.map((t) => (
        <FlatButton key={t} aria-label={t}><Icon name={t} size={13} /></FlatButton>
      ))}
      <Slot $width={6}><Grip /></Slot>
      <SnapKeys>
        {snapKeys.map((k) => (
          <SnapKey key={k} $on={snapsOn.includes(k)}>{k}</SnapKey>
        ))}
      </SnapKeys>
      <Grip />
      <Slot $width={60}>
        <Icon name="folderBox" />
        <Icon name="folderGear" />
        <Icon name="folderGear" />
      </Slot>
      <Slot $width={32}>
        <Grip />
        <PropertyInput $width={22} aria-label="Scale" />
        <Grip />
      </Slot>
      <Slot $width={26}><Icon name="target" /></Slot>
      <Grip />
      <Slot $width={28}><Icon name="editNote" /></Slot>
      <Grip />
      <Slot $width={28}><Icon name="measure" size={13} /></Slot>
      <Grip />
      <Slot $width={28}><Icon name="script" /></Slot>
    </MainBar>
  </>
);

const PlanView = () => (
  <MdiArea>
    <PlanWindow>
      <PlanTitle>
        <Icon name="plan" size={13} />
        Plan 1
        <Spacer />
        <MdiButton aria-label="Minimize"><Icon name="mdiMin" size={11} /></MdiButton>
        <MdiButton aria-label="Maximize"><Icon name="mdiMax" size={10} /></MdiButton>
      </PlanTitle>
      <PlanTools>
        {planTools.map((t) => (
          <ToolButton key={t} aria-label={t}><Icon name={t} size={13} /></ToolButton>
        ))}
      </PlanTools>
      <Canvas>
        <ExportDialog />
      </Canvas>
    </PlanWindow>
    <Scrollbar $vertical>
      <ScrollEnd aria-label="Scroll up"><Icon name="chevronUp" size={9} /></ScrollEnd>
      <ScrollThumb $grow={600} />
      <ScrollRest $grow={22} />
      <ScrollEnd aria-label="Scroll down"><Icon name="chevron" size={9} /></ScrollEnd>
    </Scrollbar>
    <Scrollbar>
      <ScrollEnd aria-label="Scroll left"><Icon name="chevronLeft" size={9} /></ScrollEnd>
      <ScrollThumb $grow={270} />
      <ScrollRest $grow={298} />
      <ScrollEnd aria-label="Scroll right"><Icon name="chevronRight" size={9} /></ScrollEnd>
    </Scrollbar>
  </MdiArea>
);

const Cad = () => (
  <CadApp>
    <TopBars />
    <Workspace>
      <SideBar>
        {sideGroups.map((group, i) => (
          <React.Fragment key={i}>
            <SideGrip $first={i === 0} />
            {group.map((t) => (
              <SideTool key={t} aria-label={t}><Icon name={t} size={13} /></SideTool>
            ))}
          </React.Fragment>
        ))}
      </SideBar>
      <MdiFrame>
        <PlanView />
        <ViewTabs>
          {viewTabs.map(([label, icon]) => (
            <ViewTab key={label} $active={label === "1"}>
              <Icon name={icon} size={13} />
              {label}
            </ViewTab>
          ))}
          <Spacer />
          <FlatButton $width={13} aria-label="Previous"><Icon name="triLeft" size={9} /></FlatButton>
          <FlatButton $width={16} aria-label="Next"><Icon name="triRight" size={9} /></FlatButton>
        </ViewTabs>
      </MdiFrame>
    </Workspace>
  </CadApp>
);

const VideoThumb = () => (
  <svg width="71" height="43" viewBox="0 0 71 43" aria-hidden="true">
    <path d="M0 0h71v43H0z" fill="#555" />
    <path d="M7 0h57v43H7z" fill="#15171a" />
    <path d="M8 2h55v39H8z" fill="#b3b4b6" />
    <path d="M8 2h55v3H8z" fill="#a9b3d6" />
    <path d="M37 5h26v36H41V27h-4z" fill="#e3e5e6" />
    <path d="M39 9v25M43 12v24M46 14h15M46 18h15M46 22h8M46 26h8M46 30h15M46 34h15M55 14v22" stroke="#c2c6c8" />
    <path d="M3.500 2v40M67.500 2v40" stroke="#d5d5d5" strokeWidth="4" strokeDasharray="5 3.500" />
  </svg>
);

const PdfIcon = () => (
  <PdfBadge>
    <svg width="56" height="68" viewBox="0 0 56 68" aria-hidden="true">
      <path d="M7 1.500h33L54.500 14v47q0 5.500-6 5.500H7q-5.500 0-5.500-5.500V7Q1.500 1.500 7 1.500z" fill="#f4f4f4" stroke="#d8201f" strokeWidth="2.200" />
      <path d="M15 41c-2-1 1-5 7-8 5-3 14-5 18-4 4 2 1 5-4 3-6-2-10-9-10-14 0-3 3-3 3 0 0 5-3 13-7 19-3 4-5 5-7 4z" fill="none" stroke="#d8201f" strokeWidth="1.400" />
    </svg>
    <span>PDF</span>
  </PdfBadge>
);

const FileExplorer = () => (
  <Explorer>
    <ExplorerTitle>
      <QuickAccess>
        <Icon name="explorerFolder" size={13} />
        <Divider />
        <Slot $width={15}><Icon name="docCheck" size={13} /></Slot>
        <Icon name="explorerFolder" size={13} />
        <Icon name="caretBar" size={7} />
        <Divider />
      </QuickAccess>
      <PlayTab>Play</PlayTab>
      <ExplorerName>Write_DWG_DXF_file_for</ExplorerName>
      <FlatButton $width={35} $color="#999" aria-label="Minimize"><Icon name="winMin" size={12} /></FlatButton>
      <FlatButton $width={34} $color="#777" aria-label="Maximize"><Icon name="winMax" size={12} /></FlatButton>
      <FlatButton $width={36} $color="#888" aria-label="Close"><Icon name="winClose" size={12} /></FlatButton>
    </ExplorerTitle>
    <Ribbon>
      <RibbonTab $width={43} $file>File</RibbonTab>
      <RibbonTab>Home</RibbonTab>
      <RibbonTab>Share</RibbonTab>
      <RibbonTab>View</RibbonTab>
      <RibbonTab $width={68} $context>Video Tools</RibbonTab>
      <Spacer />
      <FlatButton $width={8} $color="#888" aria-label="Collapse ribbon"><Icon name="chevron" size={8} /></FlatButton>
      <Help aria-label="Help">?</Help>
    </Ribbon>
    <AddressRow>
      <FlatButton aria-label="Back"><Icon name="back" size={11} /></FlatButton>
      <FlatButton $width={24} aria-label="Forward"><Icon name="forward" size={11} /></FlatButton>
      <FlatButton $width={13} $color="#888" aria-label="Recent"><Icon name="chevron" size={7} /></FlatButton>
      <FlatButton aria-label="Up"><Icon name="up" size={11} /></FlatButton>
      <Address>
        <Icon name="explorerFolder" size={13} />
        <CrumbArrow>«</CrumbArrow>
        {crumbs.map((c, i) => (
          <React.Fragment key={c}>
            {i > 0 && <CrumbArrow><Icon name="chevronRight" size={7} /></CrumbArrow>}
            <Crumb href="#">{c}</Crumb>
          </React.Fragment>
        ))}
        <Spacer />
        <FlatButton $width={14} aria-label="History"><Icon name="chevron" size={8} /></FlatButton>
        <Refresh $width={16} aria-label="Refresh"><Icon name="refresh" size={11} /></Refresh>
      </Address>
      <SearchBox>
        <input type="text" aria-label="Search" placeholder="Search Write_DWG_DXF_file_for" />
        <Icon name="search" size={10} />
      </SearchBox>
    </AddressRow>
    <Files>
      <File $selected>
        <VideoThumb />
        DPTI_Export_to_DWG.mp4
      </File>
      <File>
        <PdfIcon />
        DPTI_Export_to_DWG.pdf
      </File>
    </Files>
    <StatusBar>
      <StatusItem $gap={14}>2 items</StatusItem>
      <StatusItem $gap={4}>1 item selected</StatusItem>
      <StatusItem>11.2 MB</StatusItem>
      <Spacer />
      <ViewMode aria-label="Details view"><Icon name="details" size={12} /></ViewMode>
      <ViewMode $active aria-label="Thumbnail view"><Icon name="thumbs" size={12} /></ViewMode>
    </StatusBar>
  </Explorer>
);

const App = () => (
  <>
    <GlobalStyle />
    <Screen>
      <Cad />
      <Desktop>
        <FileExplorer />
      </Desktop>
    </Screen>
  </>
);

export default App;
